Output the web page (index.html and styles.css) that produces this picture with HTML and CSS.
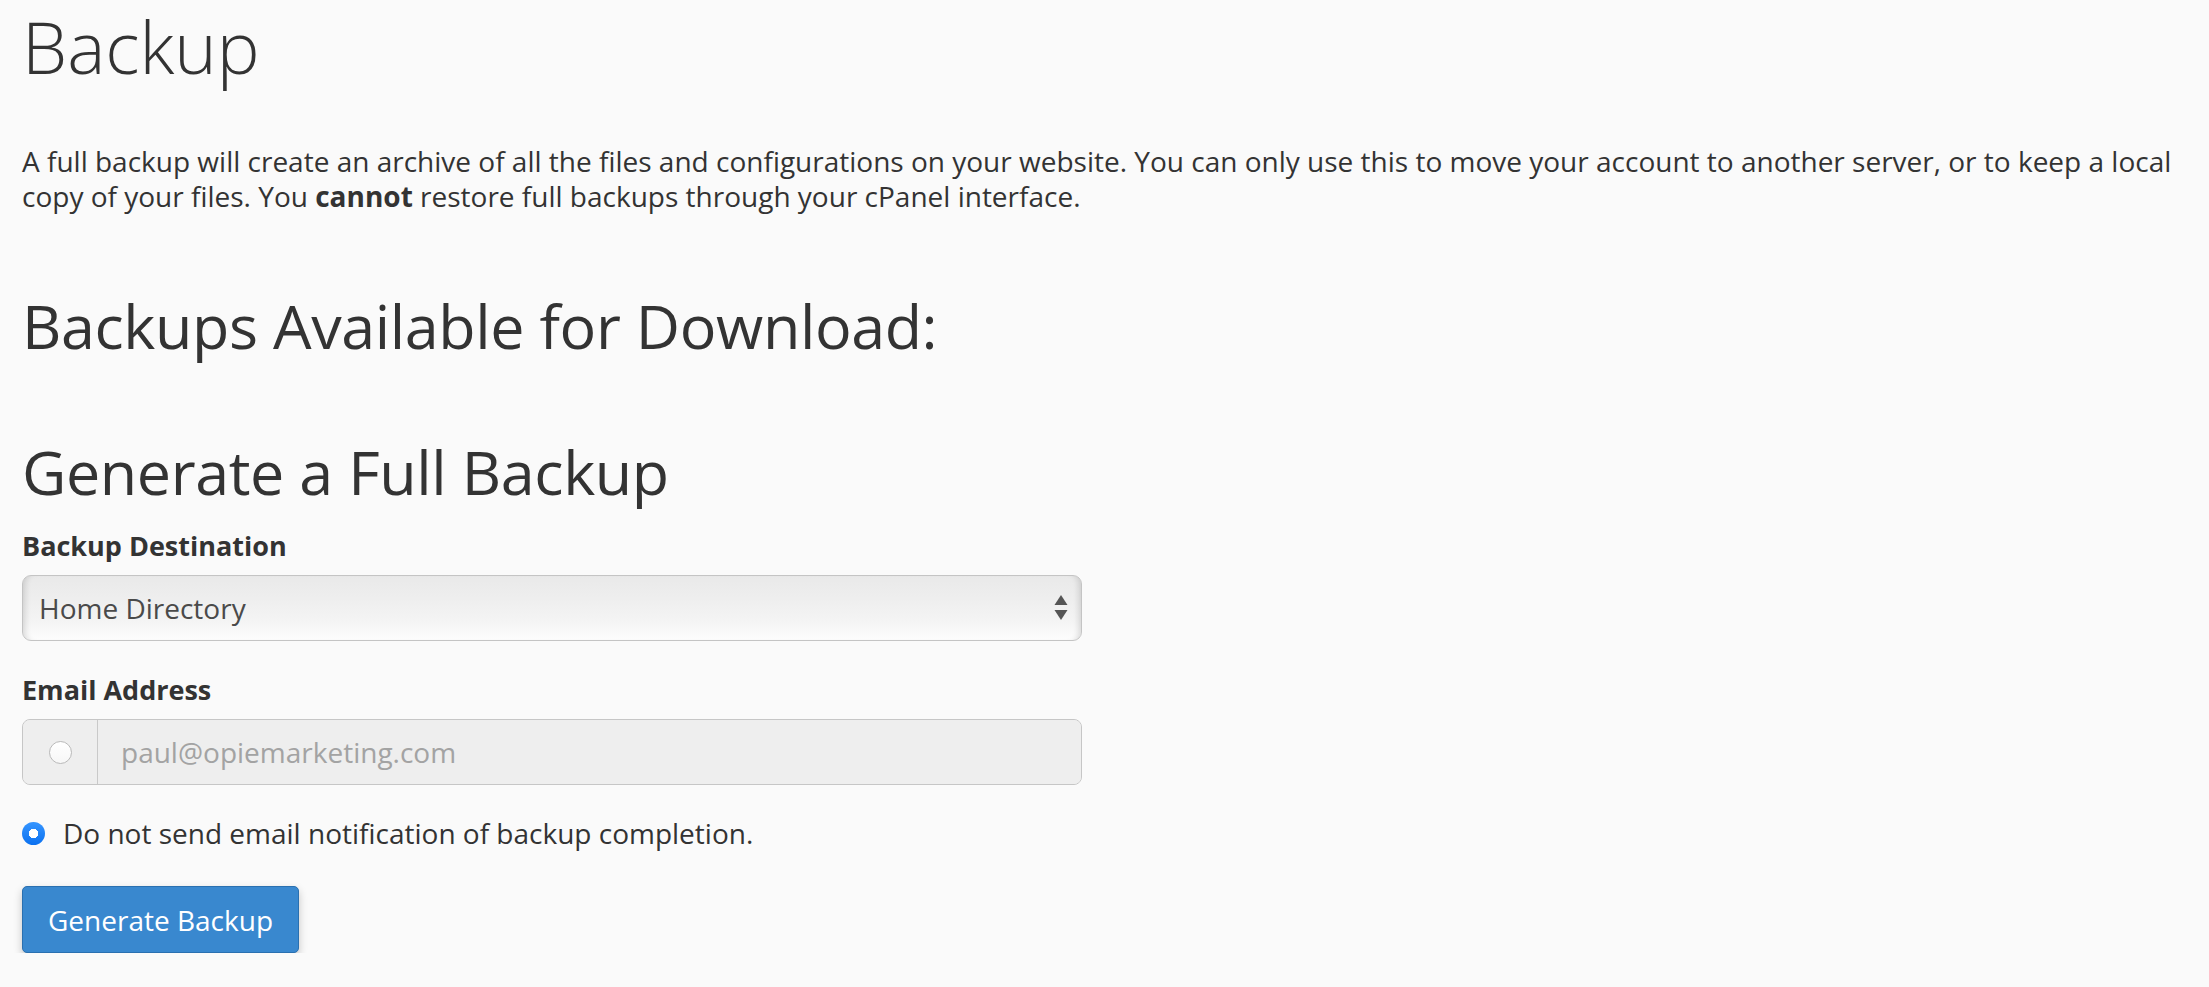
FILE: index.html
```html
<!DOCTYPE html>
<html lang="en">
<head>
<meta charset="utf-8">
<title>Backup</title>
<link rel="stylesheet" href="styles.css">
</head>
<body>
<main class="page">
  <h1 class="page-title">Backup</h1>
  <p class="intro">A full backup will create an archive of all the files and configurations on your website. You can only use this to move your account to another server, or to keep a local copy of your files. You <strong>cannot</strong> restore full backups through your cPanel interface.</p>

  <h2 class="section-title section-download">Backups Available for Download:</h2>

  <h2 class="section-title section-generate">Generate a Full Backup</h2>

  <form class="backup-form">
    <label class="field-label" for="dest">Backup Destination</label>
    <div class="select-wrap">
      <select id="dest" class="select">
        <option>Home Directory</option>
      </select>
      <svg class="select-arrows" width="14" height="26" viewBox="0 0 14 26" aria-hidden="true">
        <path d="M7 0 L13.5 10 L0.5 10 Z" fill="#555"/>
        <path d="M0.5 15 L13.5 15 L7 25 Z" fill="#555"/>
      </svg>
    </div>

    <label class="field-label field-email" for="email">Email Address</label>
    <div class="input-group">
      <span class="addon"><span class="radio"></span></span>
      <input id="email" class="text-input" type="text" placeholder="paul@opiemarketing.com" disabled>
    </div>

    <div class="radio-row">
      <span class="radio radio-checked"></span>
      <span class="radio-label">Do not send email notification of backup completion.</span>
    </div>

    <button type="button" class="btn-primary">Generate Backup</button>
  </form>
</main>
</body>
</html>
```

FILE: styles.css
```css
html, body {
  margin: 0;
  padding: 0;
  background: #fafafa;
}

body {
  font-family: "Open Sans", "Liberation Sans", sans-serif;
  color: #333333;
}

.page {
  padding: 0 23px 0 22px;
}

.page-title {
  font-size: 72px;
  font-weight: 300;
  line-height: 80px;
  margin: 6px 0 0;
  color: #333;
}

.intro {
  font-size: 28px;
  line-height: 35px;
  margin: 58px 0 0;
  color: #333;
}

.intro strong {
  font-weight: 700;
}

.section-title {
  font-size: 61px;
  font-weight: 400;
  letter-spacing: -0.4px;
  line-height: 70px;
  margin: 0;
  color: #333;
}

.section-download {
  margin-top: 77px;
}

.section-generate {
  margin-top: 76px;
}

.backup-form {
  display: flex;
  flex-direction: column;
  align-items: flex-start;
}

.field-label {
  display: block;
  font-size: 27px;
  line-height: 35px;
  font-weight: 700;
  margin-top: 21px;
  color: #333;
}

.field-email {
  margin-top: 31px;
}

.select-wrap {
  position: relative;
  margin-top: 12px;
  width: 1060px;
}

.select {
  -webkit-appearance: none;
  appearance: none;
  display: block;
  width: 100%;
  height: 66px;
  box-sizing: border-box;
  border: 1.5px solid #c4c4c4;
  border-radius: 9px;
  padding: 0 40px 0 16px;
  font-family: "Open Sans", "Liberation Sans", sans-serif;
  font-size: 28px;
  color: #4a4a4a;
  background: linear-gradient(to bottom, #e9e9e9 0%, #eeeeee 35%, #f4f4f4 70%, #fdfdfd 100%);
  box-shadow: inset 7px 0 6px -5px rgba(0, 0, 0, 0.14), inset -7px 0 6px -5px rgba(0, 0, 0, 0.14);
  outline: none;
}

.select-arrows {
  position: absolute;
  right: 14px;
  top: 20px;
  pointer-events: none;
}

.input-group {
  display: flex;
  margin-top: 12px;
  width: 1060px;
  height: 66px;
  box-sizing: border-box;
  border: 1.5px solid #c6c6c6;
  border-radius: 8px;
  background: #eeeeee;
  overflow: hidden;
}

.addon {
  flex: 0 0 74px;
  display: flex;
  align-items: center;
  justify-content: center;
  border-right: 1.5px solid #c9c9c9;
  background: #eeeeee;
}

.radio {
  display: inline-block;
  width: 23px;
  height: 23px;
  box-sizing: border-box;
  border-radius: 50%;
  border: 1px solid #b9b9b9;
  background: linear-gradient(to bottom, #ffffff, #f7f7f7);
}

.text-input {
  flex: 1;
  border: 0;
  background: #eeeeee;
  padding: 0 20px 0 23px;
  font-family: "Open Sans", "Liberation Sans", sans-serif;
  font-size: 28px;
  color: #999;
  outline: none;
}

.text-input::placeholder {
  color: #a3a3a3;
  opacity: 1;
}

.radio-row {
  display: flex;
  align-items: center;
  margin-top: 28px;
  height: 40px;
}

.radio-checked {
  border: 0;
  background: radial-gradient(circle, #ffffff 0 4.5px, transparent 5px), linear-gradient(to bottom, #3595ff, #0b71f0);
}

.radio-label {
  margin-left: 18px;
  font-size: 28px;
  line-height: 35px;
  color: #333;
}

.btn-primary {
  margin-top: 33px;
  height: 67px;
  padding: 0 25px;
  box-sizing: border-box;
  border: 1.5px solid #2a70b0;
  border-radius: 5px;
  background: #3988cf;
  color: #ffffff;
  font-family: "Open Sans", "Liberation Sans", sans-serif;
  font-size: 28px;
  box-shadow: 0 4px 9px rgba(0, 0, 0, 0.22);
  cursor: pointer;
}
```
